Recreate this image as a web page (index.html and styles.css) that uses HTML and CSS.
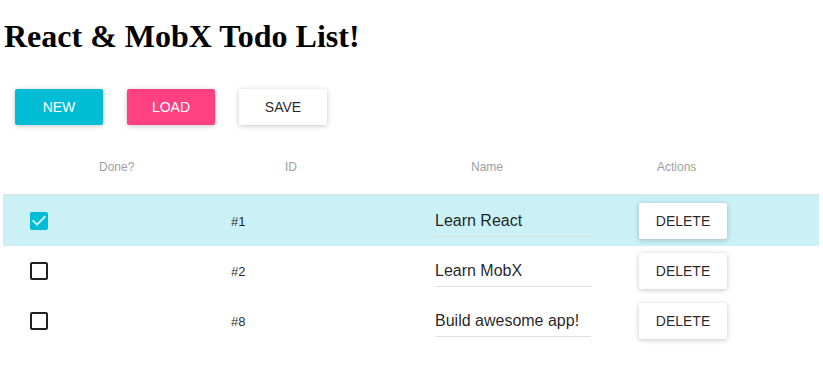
FILE: index.html
```html
<!DOCTYPE html>
<html lang="en">
<head>
  <meta charset="UTF-8">
  <meta name="viewport" content="width=device-width, initial-scale=1.0">
  <title>React &amp; MobX Todo List!</title>
  <link rel="stylesheet" href="styles.css">
</head>
<body>
  <div class="app">
    <h1>React &amp; MobX Todo List!</h1>

    <div class="toolbar">
      <button class="btn btn-primary">New</button>
      <button class="btn btn-secondary">Load</button>
      <button class="btn">Save</button>
    </div>

    <div class="table">
      <div class="table-head">
        <div class="th"></div>
        <div class="th">Done?</div>
        <div class="th">ID</div>
        <div class="th">Name</div>
        <div class="th">Actions</div>
      </div>

      <div class="row selected">
        <div class="cell">
          <svg class="check checked" viewBox="0 0 24 24"><path d="M19 3H5c-1.11 0-2 .9-2 2v14c0 1.1.89 2 2 2h14c1.11 0 2-.9 2-2V5c0-1.1-.89-2-2-2zm-9 14l-5-5 1.41-1.41L10 14.17l7.59-7.59L19 8l-9 9z"/></svg>
        </div>
        <div class="cell id">#1</div>
        <div class="cell name">
          <div class="field"><input type="text" value="Learn React"></div>
        </div>
        <div class="cell">
          <button class="btn">Delete</button>
        </div>
      </div>

      <div class="row">
        <div class="cell">
          <svg class="check" viewBox="0 0 24 24"><path d="M19 5v14H5V5h14m0-2H5c-1.1 0-2 .9-2 2v14c0 1.1.9 2 2 2h14c1.1 0 2-.9 2-2V5c0-1.1-.9-2-2-2z"/></svg>
        </div>
        <div class="cell id">#2</div>
        <div class="cell name">
          <div class="field"><input type="text" value="Learn MobX"></div>
        </div>
        <div class="cell">
          <button class="btn">Delete</button>
        </div>
      </div>

      <div class="row">
        <div class="cell">
          <svg class="check" viewBox="0 0 24 24"><path d="M19 5v14H5V5h14m0-2H5c-1.1 0-2 .9-2 2v14c0 1.1.9 2 2 2h14c1.1 0 2-.9 2-2V5c0-1.1-.9-2-2-2z"/></svg>
        </div>
        <div class="cell id">#8</div>
        <div class="cell name">
          <div class="field"><input type="text" value="Build awesome app!"></div>
        </div>
        <div class="cell">
          <button class="btn">Delete</button>
        </div>
      </div>
    </div>
  </div>
</body>
</html>
```

FILE: styles.css
```css
body {
  margin: 0;
  font-family: "Liberation Sans", Arial, sans-serif;
  background: #fff;
}
.app {
  margin: 0 4px 0 3px;
}
h1 {
  font-family: "Liberation Serif", serif;
  font-size: 32px;
  font-weight: bold;
  line-height: 36px;
  margin: 18px 0 0 1px;
}
.toolbar {
  display: flex;
  gap: 24px;
  padding: 0 12px;
  margin-top: 35px;
}
.btn {
  width: 88px;
  height: 36px;
  padding: 0;
  border: none;
  border-radius: 2px;
  background: #fff;
  color: rgba(0, 0, 0, 0.87);
  font-family: "Liberation Sans", Arial, sans-serif;
  font-size: 14px;
  text-transform: uppercase;
  box-shadow: rgba(0, 0, 0, 0.12) 0 1px 6px, rgba(0, 0, 0, 0.12) 0 1px 4px;
  cursor: pointer;
}
.btn-primary {
  background: #00bcd4;
  color: #fff;
}
.btn-secondary {
  background: #ff4081;
  color: #fff;
}
.table {
  margin-top: 14px;
}
.table-head {
  display: grid;
  grid-template-columns: 72px repeat(4, 1fr);
  height: 56px;
  box-sizing: border-box;
  border-bottom: 1px solid #e0e0e0;
  align-items: center;
}
.th {
  padding-left: 24px;
  font-size: 12px;
  color: #9e9e9e;
}
.row {
  display: grid;
  grid-template-columns: repeat(4, 1fr);
  height: 50px;
  box-sizing: border-box;
  padding-top: 2px;
}
.row.selected {
  background: #cbf0f6;
  box-shadow: 0 1px 0 #cbf0f6;
}
.cell {
  display: flex;
  align-items: center;
  padding: 0 24px;
  font-size: 13px;
  color: rgba(0, 0, 0, 0.87);
}
.check {
  width: 24px;
  height: 24px;
  fill: rgba(0, 0, 0, 0.87);
}
.check.checked {
  fill: #00bcd4;
}
.cell.name {
  align-items: flex-start;
}
.field {
  width: 100%;
  margin-top: 12px;
  padding-bottom: 3px;
  border-bottom: 1px solid #e0e0e0;
}
.field input {
  width: 100%;
  height: 24px;
  padding: 0;
  border: none;
  outline: none;
  background: transparent;
  font-family: "Liberation Sans", Arial, sans-serif;
  font-size: 16px;
  color: rgba(0, 0, 0, 0.87);
}
```
